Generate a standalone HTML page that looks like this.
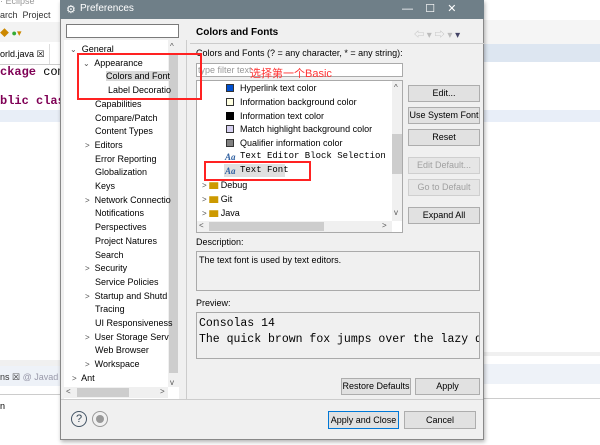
<!DOCTYPE html>
<html><head><meta charset="utf-8"><style>
*{margin:0;padding:0;box-sizing:border-box}
body{width:600px;height:445px;overflow:hidden;position:relative;background:#fff;font-family:"Liberation Sans","Noto Sans CJK SC",sans-serif;font-size:9px;color:#000}
.a{position:absolute;white-space:nowrap}
.btn{position:absolute;background:#e1e1e1;border:1px solid #adadad;text-align:center;font-size:9px;line-height:15px}
.dis{color:#a0a0a0;background:#e6e6e6;border-color:#cfcfcf}
.mono{font-family:"Liberation Mono","DejaVu Sans Mono",monospace}
.tw{color:#555;font-size:8px}
</style></head><body>
<div class="a" style="left:0;top:-4px;color:#999">· Eclipse</div>
<div class="a" style="left:0;top:10px;color:#333">arch &nbsp;Project</div>
<div class="a" style="left:0;top:22px;width:60px;height:20px;background:#f3f3f3"></div>
<div class="a" style="left:0;top:26px;color:#c80">◆ <span style="color:#3a3">●</span>▾</div>
<div class="a" style="left:0;top:44px;width:50px;height:20px;background:#fff;border-right:1px solid #ddd"></div>
<div class="a" style="left:0;top:49px">orld.java ☒</div>
<div class="a" style="left:0;top:64px;width:60px;height:1px;background:#ccc"></div>
<div class="a mono" style="left:0;top:65px;font-size:12px;color:#7f0055;font-weight:bold">ckage <span style="color:#000;font-weight:normal">com</span></div>
<div class="a mono" style="left:0;top:94px;font-size:12px;color:#7f0055;font-weight:bold">blic clas</div>
<div class="a" style="left:0;top:110px;width:60px;height:12px;background:#e8eef7"></div>
<div class="a" style="left:0;top:360px;width:60px;height:6px;background:#f0f0f0"></div>
<div class="a" style="left:0;top:366px;width:60px;height:20px;background:#eef2f8"></div>
<div class="a" style="left:0;top:372px;color:#333">ns ☒ <span style="color:#99a">@ Javad</span></div>
<div class="a" style="left:0;top:394px;width:60px;height:1px;background:#ccc"></div>
<div class="a" style="left:0;top:401px">n</div>
<div class="a" style="left:484px;top:20px;width:116px;height:24px;background:#f5f5f5"></div>
<div class="a" style="left:484px;top:44px;width:116px;height:18px;background:#dde6f1"></div>
<div class="a" style="left:484px;top:110px;width:116px;height:12px;background:#e8eef8"></div>
<div class="a" style="left:484px;top:352px;width:116px;height:4px;background:#f0f0f0"></div>
<div class="a" style="left:484px;top:364px;width:116px;height:20px;background:#eef2f8"></div>
<div class="a" style="left:484px;top:398px;width:116px;height:1px;background:#ccc"></div>
<div class="a" style="left:60px;top:0;width:424px;height:440px;background:#f0f0f0;border:1px solid #888;box-shadow:1px 2px 4px rgba(0,0,0,.3)"></div>
<div class="a" style="left:60px;top:0;width:424px;height:19px;background:#6f7f88"></div>
<div class="a" style="left:66px;top:3px;color:#fff;font-size:11px">⚙</div>
<div class="a" style="left:80px;top:3px;color:#fff;font-size:10px">Preferences</div>
<div class="a" style="left:402px;top:2px;color:#fff;font-size:11px">—&nbsp;&nbsp;&nbsp;&nbsp;☐&nbsp;&nbsp;&nbsp;&nbsp;✕</div>
<div class="a" style="left:64px;top:40px;width:115px;height:359px;background:#fff"></div>
<div class="a" style="left:66px;top:24px;width:113px;height:14px;background:#fff;border:1px solid #7a7a7a"></div>
<div class="a" style="left:168px;top:40px;width:11px;height:347px;background:#f0f0f0"></div>
<div class="a" style="left:169px;top:55px;width:9px;height:318px;background:#cdcdcd"></div>
<div class="a tw" style="left:170px;top:42px">^</div>
<div class="a tw" style="left:170px;top:378px">v</div>
<div class="a" style="left:64px;top:387px;width:104px;height:11px;background:#f0f0f0"></div>
<div class="a" style="left:77px;top:388px;width:52px;height:9px;background:#cdcdcd"></div>
<div class="a tw" style="left:66px;top:387px">&lt;</div><div class="a tw" style="left:160px;top:387px">&gt;</div>
<div class="a" style="left:186px;top:40px;width:1px;height:360px;background:#ccc"></div>
<div style="position:absolute;left:70px;top:43px;line-height:13.7px;font-size:9px">
<div><span class="tw">⌄</span>&nbsp; General</div>
<div style="padding-left:13px"><span class="tw">⌄</span>&nbsp; Appearance</div>
<div style="padding-left:36px"><span style="background:#d9d9d9">Colors and Font</span></div>
<div style="padding-left:38px">Label Decoratio</div>
<div style="padding-left:25px">Capabilities</div>
<div style="padding-left:25px">Compare/Patch</div>
<div style="padding-left:25px">Content Types</div>
<div style="padding-left:15px"><span class="tw">&gt;</span>&nbsp; Editors</div>
<div style="padding-left:25px">Error Reporting</div>
<div style="padding-left:25px">Globalization</div>
<div style="padding-left:25px">Keys</div>
<div style="padding-left:15px"><span class="tw">&gt;</span>&nbsp; Network Connectio</div>
<div style="padding-left:25px">Notifications</div>
<div style="padding-left:25px">Perspectives</div>
<div style="padding-left:25px">Project Natures</div>
<div style="padding-left:25px">Search</div>
<div style="padding-left:15px"><span class="tw">&gt;</span>&nbsp; Security</div>
<div style="padding-left:25px">Service Policies</div>
<div style="padding-left:15px"><span class="tw">&gt;</span>&nbsp; Startup and Shutd</div>
<div style="padding-left:25px">Tracing</div>
<div style="padding-left:25px">UI Responsiveness</div>
<div style="padding-left:15px"><span class="tw">&gt;</span>&nbsp; User Storage Serv</div>
<div style="padding-left:25px">Web Browser</div>
<div style="padding-left:15px"><span class="tw">&gt;</span>&nbsp; Workspace</div>
<div style="padding-left:2px"><span class="tw">&gt;</span>&nbsp; Ant</div>
</div>
<div class="a" style="left:196px;top:27px;font-weight:bold;font-size:10px">Colors and Fonts</div>
<div class="a" style="left:414px;top:26px;color:#bbb;font-size:10px">⇦ ▾ ⇨ ▾ <span style="color:#446">▾</span></div>
<div class="a" style="left:190px;top:43px;width:294px;height:1px;background:#ccc"></div>
<div class="a" style="left:196px;top:48px">Colors and Fonts (? = any character, * = any string):</div>
<div class="a" style="left:196px;top:63px;width:207px;height:14px;background:#fff;border:1px solid #aaa"></div>
<div class="a" style="left:198px;top:65px;color:#999">type filter text</div>
<div class="a" style="left:196px;top:80px;width:207px;height:153px;background:#fff;border:1px solid #aaa"></div>
<div class="a" style="left:392px;top:81px;width:10px;height:140px;background:#f0f0f0"></div>
<div class="a" style="left:392px;top:134px;width:10px;height:40px;background:#cdcdcd"></div>
<div class="a tw" style="left:394px;top:83px">^</div><div class="a tw" style="left:394px;top:208px">v</div>
<div class="a" style="left:197px;top:221px;width:195px;height:11px;background:#f0f0f0"></div>
<div class="a" style="left:209px;top:222px;width:115px;height:9px;background:#cdcdcd"></div>
<div class="a tw" style="left:199px;top:221px">&lt;</div><div class="a tw" style="left:382px;top:221px">&gt;</div>
<div class="a" style="left:226px;top:84px;width:8px;height:8px;background:#0050d0;border:1px solid #333"></div>
<div class="a" style="left:226px;top:98px;width:8px;height:8px;background:#ffffe1;border:1px solid #333"></div>
<div class="a" style="left:226px;top:112px;width:8px;height:8px;background:#000"></div>
<div class="a" style="left:226px;top:125px;width:8px;height:8px;background:#d6d0f0;border:1px solid #333"></div>
<div class="a" style="left:226px;top:139px;width:8px;height:8px;background:#808080;border:1px solid #333"></div>
<div class="a" style="left:240px;top:83px">Hyperlink text color</div>
<div class="a" style="left:240px;top:97px">Information background color</div>
<div class="a" style="left:240px;top:111px">Information text color</div>
<div class="a" style="left:240px;top:124px">Match highlight background color</div>
<div class="a" style="left:240px;top:138px">Qualifier information color</div>
<div class="a" style="left:225px;top:152px;color:#3060a0;font-style:italic;font-family:'Liberation Serif',serif;font-weight:bold">Aa</div>
<div class="a mono" style="left:240px;top:151px;font-size:9px;width:152px;overflow:hidden">Text Editor Block Selection Font</div>
<div class="a" style="left:224px;top:164px;width:61px;height:13px;background:#e0e0e0"></div>
<div class="a" style="left:225px;top:166px;color:#3060a0;font-style:italic;font-family:'Liberation Serif',serif;font-weight:bold">Aa</div>
<div class="a mono" style="left:240px;top:165px;font-size:9px">Text Font</div>
<div class="a" style="left:202px;top:178px"><span class="tw">&gt;</span> <span style="color:#c90">▆</span> Debug</div>
<div class="a" style="left:202px;top:192px"><span class="tw">&gt;</span> <span style="color:#c90">▆</span> Git</div>
<div class="a" style="left:202px;top:206px"><span class="tw">&gt;</span> <span style="color:#c90">▆</span> Java</div>
<div class="btn" style="left:408px;top:85px;width:72px;height:17px">Edit...</div>
<div class="btn" style="left:408px;top:107px;width:72px;height:17px">Use System Font</div>
<div class="btn" style="left:408px;top:129px;width:72px;height:17px">Reset</div>
<div class="btn dis" style="left:408px;top:157px;width:72px;height:17px">Edit Default...</div>
<div class="btn dis" style="left:408px;top:179px;width:72px;height:17px">Go to Default</div>
<div class="btn" style="left:408px;top:207px;width:72px;height:17px">Expand All</div>
<div class="a" style="left:196px;top:237px">Description:</div>
<div class="a" style="left:196px;top:251px;width:284px;height:40px;border:1px solid #aaa"></div>
<div class="a" style="left:199px;top:255px">The text font is used by text editors.</div>
<div class="a" style="left:196px;top:298px">Preview:</div>
<div class="a" style="left:196px;top:312px;width:284px;height:47px;border:1px solid #aaa;overflow:hidden"><div class="mono" style="padding:3px 2px;font-size:11.5px;line-height:16px;white-space:nowrap">Consolas 14<br>The quick brown fox jumps over the lazy d</div></div>
<div class="btn" style="left:341px;top:378px;width:70px;height:17px">Restore Defaults</div>
<div class="btn" style="left:415px;top:378px;width:65px;height:17px">Apply</div>
<div class="a" style="left:61px;top:399px;width:422px;height:1px;background:#ccc"></div>
<div class="a" style="left:71px;top:411px;width:16px;height:16px;border:1px solid #456;border-radius:50%;text-align:center;line-height:14px;font-size:11px;color:#345">?</div>
<div class="a" style="left:92px;top:411px;width:16px;height:16px;border:1px solid #999;border-radius:50%;"></div>
<div class="a" style="left:96px;top:415px;width:8px;height:8px;background:#999;border-radius:50%"></div>
<div class="btn" style="left:328px;top:411px;width:71px;height:18px;border:1px solid #0078d7;line-height:16px">Apply and Close</div>
<div class="btn" style="left:404px;top:411px;width:72px;height:18px;line-height:16px">Cancel</div>
<div class="a" style="left:77px;top:53px;width:125px;height:47px;border:2px solid #f22"></div>
<div class="a" style="left:204px;top:161px;width:107px;height:20px;border:2px solid #f22"></div>
<div class="a" style="left:250px;top:65px;color:#f33;font-size:11px">选择第一个Basic</div>
</body></html>
